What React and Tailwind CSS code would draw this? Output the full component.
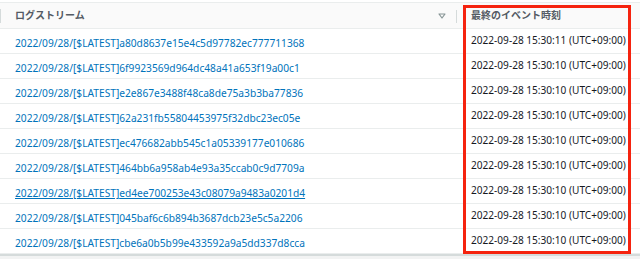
import React from 'react';

const rows = [
  ['a80d8637e15e4c5d97782ec777711368', '2022-09-28 15:30:11 (UTC+09:00)'],
  ['6f9923569d964dc48a41a653f19a00c1', '2022-09-28 15:30:10 (UTC+09:00)'],
  ['e2e867e3488f48ca8de75a3b3ba77836', '2022-09-28 15:30:10 (UTC+09:00)'],
  ['62a231fb55804453975f32dbc23ec05e', '2022-09-28 15:30:10 (UTC+09:00)'],
  ['ec476682abb545c1a05339177e010686', '2022-09-28 15:30:10 (UTC+09:00)'],
  ['464bb6a958ab4e93a35ccab0c9d7709a', '2022-09-28 15:30:10 (UTC+09:00)'],
  ['ed4ee700253e43c08079a9483a0201d4', '2022-09-28 15:30:10 (UTC+09:00)', true],
  ['045baf6c6b894b3687dcb23e5c5a2206', '2022-09-28 15:30:10 (UTC+09:00)'],
  ['cbe6a0b5b99e433592a9a5dd337d8cca', '2022-09-28 15:30:10 (UTC+09:00)'],
];

const font = { fontFamily: '"Noto Sans", "Noto Sans CJK JP", sans-serif' };

export default function App() {
  return (
    <div className="relative w-[640px] h-[259px] bg-white overflow-hidden" style={font}>
      <div className="pt-[2px]">
        {/* header */}
        <div className="grid grid-cols-[457px_1fr] h-[27px] bg-[#fafafa] border-t border-b border-[#eaeded]">
          <div className="relative flex items-center pl-[15px] pr-[10px]">
            <span className="absolute left-0 top-[6px] h-[14px] w-px bg-[#d5dbdb]" />
            <span className="flex-1 text-[10px] font-bold text-[#545b64]">ログストリーム</span>
            <svg width="8" height="6" viewBox="0 0 8 6" className="mr-[1px]">
              <path d="M1 1 L7 1 L4 5 Z" fill="none" stroke="#879596" strokeWidth="1.2" strokeLinejoin="round" />
            </svg>
            <span className="absolute right-0 top-[7px] h-[13px] w-px bg-[#d5dbdb]" />
          </div>
          <div className="flex items-center pl-[14px]">
            <span className="text-[10px] font-bold text-[#545b64]">最終のイベント時刻</span>
          </div>
        </div>

        {/* rows */}
        {rows.map(([id, time, hover], i) => (
          <div key={i} className="grid grid-cols-[457px_1fr] h-[25px] border-b border-[#eaeded] items-center">
            <div className="pl-[15px]">
              <a className={`text-[10.2px] text-[#0073bb] ${hover ? 'underline' : ''}`}>
                2022/09/28/[$LATEST]{id}
              </a>
            </div>
            <div className="pl-[14px] text-[10.1px] text-[#16191f] whitespace-nowrap">{time}</div>
          </div>
        ))}
        <div className="h-[2px] bg-[#d5dbdb]" />
        <div className="h-[10px] bg-[#f2f3f3]" />
      </div>

      {/* annotation box */}
      <div className="absolute left-[463px] top-[5px] w-[168px] h-[249px] border-[3px] border-[#f5230f]" />
    </div>
  );
}
